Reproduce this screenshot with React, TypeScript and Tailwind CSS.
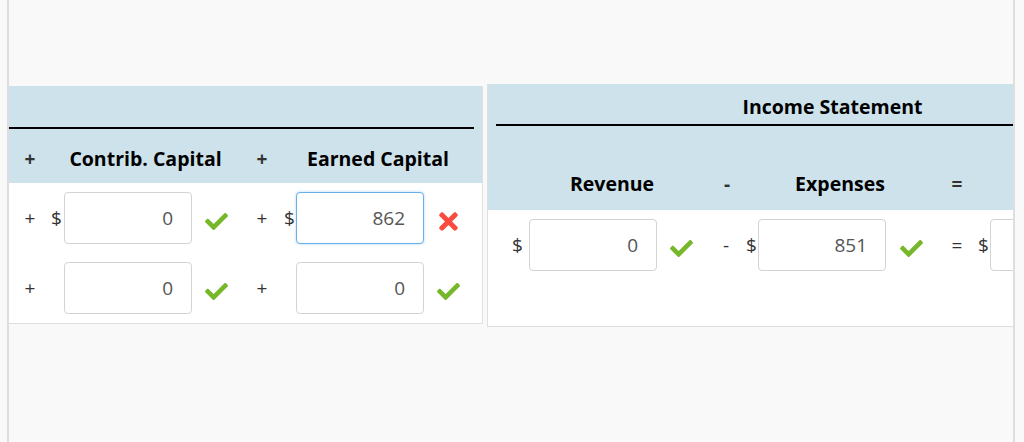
import { FaCheck, FaTimes } from "react-icons/fa";

type Status = "ok" | "bad" | "none";

interface FieldProps {
  value: string;
  status: Status;
  focused?: boolean;
  iconW: string;
}

function Field({ value, status, focused = false, iconW }: FieldProps) {
  return (
    <>
      <input
        readOnly
        value={value}
        className={
          "h-[52px] w-[128px] shrink-0 rounded-[4px] border bg-white pr-[18px] text-right text-[19px] text-[#555] outline-none " +
          (focused ? "border-[#66afe9] shadow-[0_0_3px_rgba(102,175,233,0.5)]" : "border-[#d3d3d3]")
        }
      />
      <div className={`flex shrink-0 items-center justify-center pt-[7px] ${iconW}`}>
        {status === "ok" ? <FaCheck size={23} color="#76b82a" /> : null}
        {status === "bad" ? <FaTimes size={27} color="#fb4a3e" /> : null}
      </div>
    </>
  );
}

function Op({ children, w }: { children?: string; w: string }) {
  return <div className={`shrink-0 text-center text-[19px] text-[#333] ${w}`}>{children}</div>;
}

function Dollar({ show, w }: { show: boolean; w: string }) {
  return <div className={`shrink-0 text-left text-[19px] text-[#333] ${w}`}>{show ? "$" : ""}</div>;
}

export default function App() {
  return (
    <div className="h-[442px] w-[1024px] overflow-hidden bg-[#f9f9f9] font-['Open_Sans',sans-serif]">
      <div className="ml-[7px] flex h-full w-[1008px] items-start overflow-hidden border-x-2 border-[#dedede] pt-[84px]">
        {/* balance sheet part */}
        <div className="mt-[2px] w-[474px] shrink-0 border-r border-[#e0e0e0]">
          <div className="bg-[#cde2eb]">
            <div className="h-[41px]" />
            <div className="mr-[8px] h-[2px] bg-black" />
            <div className="flex h-[54px] items-center pt-[6px] text-[19.5px] font-bold text-black">
              <Op w="w-[42px]">+</Op>
              <div className="w-[189px] shrink-0 text-center">Contrib. Capital</div>
              <Op w="w-[44px]">+</Op>
              <div className="w-[188px] shrink-0 text-center">Earned Capital</div>
            </div>
          </div>
          <div className="flex flex-col gap-[18px] border-b border-[#dedede] bg-white py-[9px]">
            <div className="flex items-center">
              <Op w="w-[42px]">+</Op>
              <Dollar show w="w-[13px]" />
              <Field value="0" status="ok" iconW="w-[48px]" />
              <Op w="w-[44px]">+</Op>
              <Dollar show w="w-[12px]" />
              <Field value="862" status="bad" focused iconW="w-[48px]" />
            </div>
            <div className="flex items-center">
              <Op w="w-[42px]">+</Op>
              <Dollar show={false} w="w-[13px]" />
              <Field value="0" status="ok" iconW="w-[48px]" />
              <Op w="w-[44px]">+</Op>
              <Dollar show={false} w="w-[12px]" />
              <Field value="0" status="ok" iconW="w-[48px]" />
            </div>
          </div>
        </div>

        {/* income statement part */}
        <div className="ml-[4px] w-[690px] shrink-0 border-l border-[#e0e0e0]">
          <div className="bg-[#cde2eb]">
            <div className="h-[40px] pt-[11px] text-center text-[19.5px] leading-[24px] font-bold text-black">
              Income Statement
            </div>
            <div className="mx-[8px] h-[2px] bg-black" />
            <div className="flex h-[84px] items-end pb-[12px] text-[19.5px] font-bold text-black">
              <div className="w-[24px] shrink-0" />
              <div className="w-[200px] shrink-0 text-center">Revenue</div>
              <Op w="w-[30px]">-</Op>
              <div className="w-[196px] shrink-0 text-center">Expenses</div>
              <Op w="w-[38px]">=</Op>
            </div>
          </div>
          <div className="h-[117px] border-b border-[#dedede] bg-white pt-[9px]">
            <div className="flex items-center">
              <div className="w-[24px] shrink-0" />
              <Dollar show w="w-[17px]" />
              <Field value="0" status="ok" iconW="w-[49px]" />
              <Op w="w-[40px]">-</Op>
              <Dollar show w="w-[12px]" />
              <Field value="851" status="ok" iconW="w-[50px]" />
              <Op w="w-[42px]">=</Op>
              <Dollar show w="w-[12px]" />
              <Field value="" status="none" iconW="w-[50px]" />
            </div>
          </div>
        </div>
      </div>
    </div>
  );
}
